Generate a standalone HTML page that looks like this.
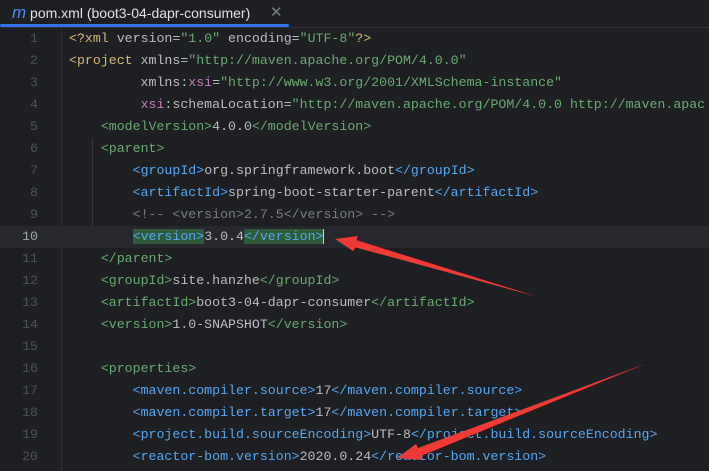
<!DOCTYPE html><html><head><style>
body{margin:0;width:709px;height:471px;background:#1e1f22;overflow:hidden;font-family:"Liberation Mono",monospace;position:relative}
.tab{position:absolute;left:0;top:0;width:709px;height:27px;background:#1e1f22;border-bottom:1px solid #2b2d30}
.tab .t{position:absolute;left:12px;top:3px;font:14px "Liberation Sans",sans-serif;color:#dfe1e5}
.tab .m{color:#548af7;font-style:italic;font-size:17px}
.tab .x{position:absolute;left:270px;top:3px;color:#7a7e85;font:15px "Liberation Sans",sans-serif}
.tab .u{position:absolute;left:0;top:24px;width:289px;height:3px;background:#3574f0;border-radius:2px}
.l{position:absolute;left:0;width:709px;height:22px;line-height:22px;font-size:13.25px;white-space:pre;color:#bcbec4}
.n{display:inline-block;width:38px;text-align:right;color:#4b5059;margin-right:31px}
.cur{background:#26282e}.cur .n{color:#a1a3ab}
.y{color:#d5b778}.g{color:#6aab73}.b{color:#56a8f5}.p{color:#c77dbb}.c{color:#7a7e85}
.h{background:#2e5c3a}
</style></head><body>
<div class="tab"><span class="t"><span class="m">m</span> pom.xml (boot3-04-dapr-consumer)</span><span class="x">✕</span><div class="u"></div></div>
<div style="position:absolute;left:61px;top:28px;width:1px;height:443px;background:#2b2d30"></div>
<div style="position:absolute;left:92px;top:138px;width:1px;height:110px;background:#313438"></div>
<div class="l" style="top:28px"><span class="n">1</span><span class="y">&lt;?xml </span>version=<span class="g">"1.0"</span> encoding=<span class="g">"UTF-8"</span><span class="y">?&gt;</span></div>
<div class="l" style="top:50px"><span class="n">2</span><span class="y">&lt;project </span>xmlns=<span class="g">"http://maven.apache.org/POM/4.0.0"</span></div>
<div class="l" style="top:72px"><span class="n">3</span>         xmlns:<span class="p">xsi</span>=<span class="g">"http://www.w3.org/2001/XMLSchema-instance"</span></div>
<div class="l" style="top:94px"><span class="n">4</span>         <span class="p">xsi</span>:schemaLocation=<span class="g">"http://maven.apache.org/POM/4.0.0 http://maven.apac</span></div>
<div class="l" style="top:116px"><span class="n">5</span>    <span class="g">&lt;modelVersion&gt;</span>4.0.0<span class="g">&lt;/modelVersion&gt;</span></div>
<div class="l" style="top:138px"><span class="n">6</span>    <span class="g">&lt;parent&gt;</span></div>
<div class="l" style="top:160px"><span class="n">7</span>        <span class="b">&lt;groupId&gt;</span>org.springframework.boot<span class="b">&lt;/groupId&gt;</span></div>
<div class="l" style="top:182px"><span class="n">8</span>        <span class="b">&lt;artifactId&gt;</span>spring-boot-starter-parent<span class="b">&lt;/artifactId&gt;</span></div>
<div class="l" style="top:204px"><span class="n">9</span>        <span class="c">&lt;!-- &lt;version&gt;2.7.5&lt;/version&gt; --&gt;</span></div>
<div class="l cur" style="top:226px"><span class="n">10</span>        <span class="b h">&lt;version&gt;</span>3.0.4<span class="b h">&lt;/version&gt;</span><span style="border-left:1px solid #ced0d6"></span></div>
<div class="l" style="top:248px"><span class="n">11</span>    <span class="g">&lt;/parent&gt;</span></div>
<div class="l" style="top:270px"><span class="n">12</span>    <span class="g">&lt;groupId&gt;</span>site.hanzhe<span class="g">&lt;/groupId&gt;</span></div>
<div class="l" style="top:292px"><span class="n">13</span>    <span class="g">&lt;artifactId&gt;</span>boot3-04-dapr-consumer<span class="g">&lt;/artifactId&gt;</span></div>
<div class="l" style="top:314px"><span class="n">14</span>    <span class="g">&lt;version&gt;</span>1.0-SNAPSHOT<span class="g">&lt;/version&gt;</span></div>
<div class="l" style="top:336px"><span class="n">15</span></div>
<div class="l" style="top:358px"><span class="n">16</span>    <span class="g">&lt;properties&gt;</span></div>
<div class="l" style="top:380px"><span class="n">17</span>        <span class="b">&lt;maven.compiler.source&gt;</span>17<span class="b">&lt;/maven.compiler.source&gt;</span></div>
<div class="l" style="top:402px"><span class="n">18</span>        <span class="b">&lt;maven.compiler.target&gt;</span>17<span class="b">&lt;/maven.compiler.target&gt;</span></div>
<div class="l" style="top:424px"><span class="n">19</span>        <span class="b">&lt;project.build.sourceEncoding&gt;</span>UTF-8<span class="b">&lt;/project.build.sourceEncoding&gt;</span></div>
<div class="l" style="top:446px"><span class="n">20</span>        <span class="b">&lt;reactor-bom.version&gt;</span>2020.0.24<span class="b">&lt;/reactor-bom.version&gt;</span></div>
<svg style="position:absolute;left:0;top:0" width="709" height="471">
<polygon points="535,296 355,244 358,236 335,239 353,251 356,247" fill="#f03a35"/>
<polygon points="535,296 356,240 354,247" fill="#f03a35"/>
<polygon points="645,364 420,452 416,444 397,458 422,460 421,456" fill="#f03a35"/>
<polygon points="645,364 418,448 421,455" fill="#f03a35"/>
</svg>
</body></html>
